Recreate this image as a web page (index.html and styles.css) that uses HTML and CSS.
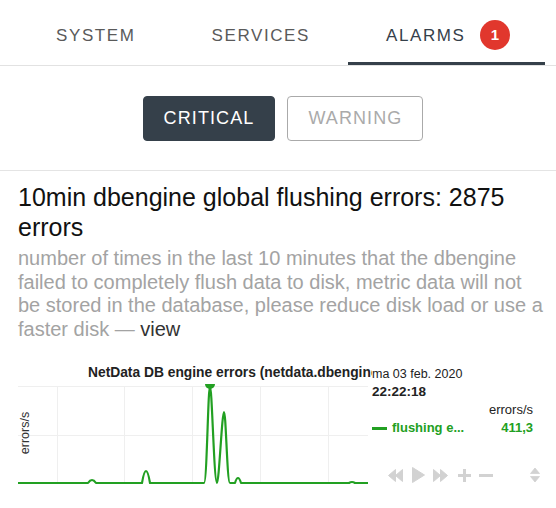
FILE: index.html
```html
<!DOCTYPE html>
<html>
<head>
<meta charset="utf-8">
<link rel="stylesheet" href="styles.css">
</head>
<body>
<nav class="tabs">
  <div class="tab">SYSTEM</div>
  <div class="tab">SERVICES</div>
  <div class="tab active">ALARMS<span class="badge">1</span></div>
</nav>
<div class="filters">
  <button class="btn btn-dark">CRITICAL</button>
  <button class="btn btn-light">WARNING</button>
</div>
<section class="alarm">
  <h1 class="alarm-title">10min dbengine global flushing errors: 2875 errors</h1>
  <p class="alarm-desc">number of times in the last 10 minutes that the dbengine failed to completely flush data to disk, metric data will not be stored in the database, please reduce disk load or use a faster disk — <span class="view">view</span></p>
</section>
<div class="chart">
  <div class="plot">
    <div class="chart-title">NetData DB engine errors (netdata.dbengine_global_errors)</div>
    <svg class="plot-svg" width="354" height="112" viewBox="0 0 354 112">
      <g stroke="#efefef" stroke-width="1">
        <line x1="0" y1="5.5" x2="350" y2="5.5"/>
        <line x1="0" y1="54.5" x2="350" y2="54.5"/>
        <line x1="39.5" y1="5" x2="39.5" y2="102"/>
        <line x1="106.5" y1="5" x2="106.5" y2="102"/>
        <line x1="174.5" y1="5" x2="174.5" y2="102"/>
        <line x1="242.5" y1="5" x2="242.5" y2="102"/>
        <line x1="310.5" y1="5" x2="310.5" y2="102"/>
      </g>
      <text class="ylabel" transform="translate(11 52) rotate(-90)" text-anchor="middle">errors/s</text>
      <path d="M0,102 L70,102 Q74,96 78,102 L124,102 Q128,78 132,102 L186,102 C189,102 190,5 192,5 C194,5 196,102 199,102 C201,102 204,31 206,31 C208,31 209,102 212,102 L217,102 Q220,92 223,102 L331,102 Q334,100 337,102 L350,102" fill="none" stroke="#22a022" stroke-width="2.2" stroke-linejoin="round"/>
      <path d="M187,3 A5,5 0 0 0 197,3 Z" fill="#22a022"/>
    </svg>
  </div>
  <div class="legend">
    <div class="lg-date">ma 03 feb. 2020</div>
    <div class="lg-time">22:22:18</div>
    <div class="lg-units">errors/s</div>
    <div class="lg-row">
      <span class="lg-swatch"></span>
      <span class="lg-name">flushing e...</span>
      <span class="lg-value">411,3</span>
    </div>
    <div class="controls">
      <svg class="ic ic-rew" width="15" height="13" viewBox="0 0 15 13"><path d="M7.5,0.5 L0.5,6.5 L7.5,12.5 Z M14.5,0.5 L7.5,6.5 L14.5,12.5 Z" fill="#d2d2d2" stroke="#d2d2d2" stroke-linejoin="round"/></svg>
      <svg class="ic ic-play" width="13" height="16" viewBox="0 0 13 16"><path d="M0.5,0.5 L12.5,8 L0.5,15.5 Z" fill="#d2d2d2" stroke="#d2d2d2" stroke-linejoin="round"/></svg>
      <svg class="ic ic-fwd" width="15" height="13" viewBox="0 0 15 13"><path d="M0.5,0.5 L7.5,6.5 L0.5,12.5 Z M7.5,0.5 L14.5,6.5 L7.5,12.5 Z" fill="#d2d2d2" stroke="#d2d2d2" stroke-linejoin="round"/></svg>
      <svg class="ic ic-plus" width="13" height="13" viewBox="0 0 13 13"><path d="M5,0 H8 V5 H13 V8 H8 V13 H5 V8 H0 V5 H5 Z" fill="#d2d2d2"/></svg>
      <svg class="ic ic-minus" width="14" height="13" viewBox="0 0 14 13"><rect x="0" y="5" width="14" height="3" fill="#d2d2d2"/></svg>
      <svg class="ic ic-sort" width="10" height="16" viewBox="0 0 10 16"><path d="M0.5,6.5 L5,1 L9.5,6.5 Z M0.5,9.5 L5,15 L9.5,9.5 Z" fill="#d2d2d2" stroke="#d2d2d2" stroke-linejoin="round" stroke-width="0.8"/></svg>
    </div>
  </div>
</div>
</body>
</html>
```
FILE: styles.css
```css
* { box-sizing: border-box; }
html, body { margin: 0; padding: 0; background: #fff; }
body {
  font-family: "Liberation Sans", Arial, sans-serif;
  color: #222;
  width: 556px;
  overflow: hidden;
}
.tabs {
  display: flex;
  padding-left: 18px;
  border-bottom: 1px solid #e2e2e2;
}
.tab {
  height: 65px;
  padding: 9px 38px 0;
  border-bottom: 3px solid transparent;
  display: flex;
  align-items: center;
  font-size: 17px;
  letter-spacing: 1.6px;
  color: #5a5a5a;
}
.tab.active {
  color: #35404a;
  border-bottom-color: #35404a;
  padding-right: 35px;
}
.badge {
  display: inline-flex;
  align-items: center;
  justify-content: center;
  width: 30px;
  height: 30px;
  border-radius: 50%;
  background: #e1372d;
  color: #fff;
  font-weight: bold;
  font-size: 15px;
  letter-spacing: 0;
  margin-left: 14.5px;
  margin-top: -2px;
}
.filters {
  display: flex;
  justify-content: center;
  gap: 12px;
  padding: 30px 0 29px 10px;
  border-bottom: 1px solid #e4e4e4;
}
.btn {
  height: 45px;
  padding: 0 20px;
  font-family: "Liberation Sans", Arial, sans-serif;
  font-size: 18px;
  letter-spacing: 1.1px;
  border-radius: 4px;
  border: 1px solid #35404a;
  background: #35404a;
  color: #fff;
}
.btn-light {
  background: #fff;
  color: #aaa;
  border-color: #aaa;
}
.alarm {
  padding: 11px 10px 0 18px;
}
.alarm-title {
  margin: 0;
  font-size: 25px;
  line-height: 30px;
  font-weight: normal;
  color: #111;
}
.alarm-desc {
  margin: 5px 0 0;
  font-size: 20px;
  line-height: 23.5px;
  color: #a3a3a3;
}
.view { color: #333; }
.chart {
  display: flex;
  margin-top: 24px;
}
.plot {
  width: 354px;
  margin-left: 18px;
  overflow: hidden;
  flex: none;
}
.chart-title {
  padding-left: 70px;
  font-size: 13.8px;
  line-height: 16px;
  font-weight: bold;
  color: #222;
  white-space: nowrap;
}
.plot-svg { display: block; }
.ylabel {
  font-family: "Liberation Sans", Arial, sans-serif;
  font-size: 12.5px;
  fill: #333;
}
.legend {
  flex: 1;
  padding-right: 16px;
  font-size: 13px;
  line-height: 18px;
  color: #222;
}
.lg-date { font-size: 12.5px; }
.lg-time { font-weight: bold; font-size: 13.5px; }
.lg-units { text-align: right; padding-right: 7px; }
.lg-row {
  display: flex;
  align-items: center;
  padding-right: 7px;
  font-weight: bold;
  color: #22a022;
}
.lg-swatch {
  width: 15px;
  height: 3px;
  background: #22a022;
  margin-right: 5px;
}
.lg-value { margin-left: auto; }
.controls {
  display: flex;
  align-items: center;
  margin-top: 29px;
  height: 18px;
  padding-left: 16px;
}
.ic { display: block; flex: none; }
.ic-play { margin-left: 9px; }
.ic-fwd { margin-left: 8px; }
.ic-plus { margin-left: 10px; }
.ic-minus { margin-left: 8px; }
.ic-sort { margin-left: auto; }
```
